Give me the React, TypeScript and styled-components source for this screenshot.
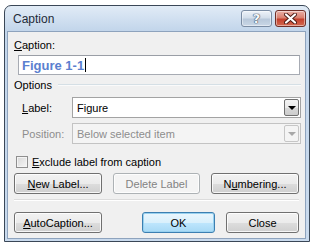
import styled, { createGlobalStyle } from "styled-components";

const GlobalStyle = createGlobalStyle`
  body {
    margin: 0;
    background: #ffffff;
    font-family: "Liberation Sans", Arial, sans-serif;
    font-size: 11px;
    color: #000;
  }
`

const Window = styled.div`
  box-sizing: border-box;
  width: 306px;
  height: 237px;
  margin: 5px 0 0 4px;
  border: 1px solid #3a4757;
  border-radius: 7px 7px 0 0;
  background: linear-gradient(#e1ebf6, #c3d6eb 24px, #c9daed);
  display: flex;
  flex-direction: column;
  padding: 0 3px 2px 2px;
`

const TitleBar = styled.div`
  height: 25px;
  display: flex;
  align-items: center;
  padding-left: 6px;
`

const Title = styled.span`
  flex: 1;
  font-size: 12px;
  color: #1e2a38;
  margin-top: 1px;
`

const CaptionButton = styled.div<{ $close?: boolean }>`
  box-sizing: border-box;
  width: 31px;
  height: 17px;
  margin-left: 3px;
  border: 1px solid ${(p) => (p.$close ? "#6e2f28" : "#7a8ca3")};
  border-radius: 3px;
  background: ${(p) =>
    p.$close
      ? "linear-gradient(#eab0a7, #d9806f 45%, #c4402d 55%, #d26a52)"
      : "linear-gradient(#eef3f9, #d3deea 45%, #b8c8da 55%, #c9d7e6)"};
  display: flex;
  align-items: center;
  justify-content: center;
  box-shadow: inset 0 0 0 1px rgba(255, 255, 255, 0.45);
`

const HelpGlyph = styled.span`
  font-family: "DejaVu Sans", sans-serif;
  font-weight: bold;
  font-size: 13px;
  line-height: 13px;
  color: #f6f8fb;
  text-shadow: 0 0 1px #3d4c60, 0 0 1px #3d4c60, 0 0 1px #3d4c60;
`

const Client = styled.div`
  flex: 1;
  border: 1px solid #8ea3bd;
  background: #f0f0f0;
  display: flex;
  flex-direction: column;
`

const FieldLabel = styled.div`
  line-height: 14px;
  margin: 6px 0 0 6px;
`

const Key = styled.span`
  text-decoration: underline;
  text-underline-offset: 1px;
`

const CaptionInput = styled.div`
  box-sizing: border-box;
  width: 282px;
  height: 20px;
  margin: 3px 0 0 10px;
  border: 1px solid #a7abb3;
  border-top-color: #9a9ea6;
  background: #fff;
  display: flex;
  align-items: center;
  padding-left: 3px;
  font-size: 13px;
  font-weight: bold;
  color: #5a80cf;
`

const Caret = styled.span`
  width: 1px;
  height: 14px;
  margin-left: 1px;
  background: #000;
`

const GroupHeader = styled.div`
  display: flex;
  align-items: center;
  margin: 3px 4px 0 6px;
  line-height: 14px;
`

const GroupLine = styled.div`
  flex: 1;
  height: 1px;
  margin-left: 6px;
  background: #d5dfe5;
  border-bottom: 1px solid #fafafa;
`

const FormRow = styled.div<{ $top: number }>`
  display: flex;
  align-items: center;
  margin: ${(p) => p.$top}px 4px 0 14px;
`

const RowLabel = styled.span<{ $disabled?: boolean }>`
  width: 50px;
  color: ${(p) => (p.$disabled ? "#8d8d8d" : "#000")};
`

const Combo = styled.div<{ $disabled?: boolean }>`
  box-sizing: border-box;
  flex: 1;
  height: 21px;
  border: 1px solid ${(p) => (p.$disabled ? "#c3c3c3" : "#a3a3a3")};
  background: ${(p) => (p.$disabled ? "#f4f4f4" : "#fff")};
  display: flex;
  align-items: center;
  padding: 0 1px 0 4px;
  color: ${(p) => (p.$disabled ? "#8d8d8d" : "#000")};
`

const ComboText = styled.span`
  flex: 1;
`

const ComboButton = styled.div<{ $disabled?: boolean }>`
  box-sizing: border-box;
  width: 15px;
  height: 17px;
  border: 1px solid ${(p) => (p.$disabled ? "#c6c6c6" : "#707070")};
  border-radius: 2px;
  background: ${(p) =>
    p.$disabled
      ? "#f4f4f4"
      : "linear-gradient(#f3f3f3, #e9e9e9 50%, #d8d8d8 51%, #cdcdcd)"};
  display: flex;
  align-items: center;
  justify-content: center;
`

const Arrow = styled.div<{ $disabled?: boolean }>`
  width: 0;
  height: 0;
  border-left: 4px solid transparent;
  border-right: 4px solid transparent;
  border-top: 4px solid ${(p) => (p.$disabled ? "#a8a8a8" : "#000")};
  margin-top: 1px;
`

const CheckRow = styled.label`
  display: flex;
  align-items: center;
  margin: 11px 0 0 8px;
  gap: 4px;
  line-height: 14px;
`

const Box = styled.span`
  box-sizing: border-box;
  width: 12px;
  height: 12px;
  border: 1px solid #8f8f8f;
  background: linear-gradient(135deg, #d8d8d8, #f6f6f6);
  box-shadow: inset 0 0 0 1px #f4f4f4;
`

const ButtonRow = styled.div<{ $top: number }>`
  display: flex;
  align-items: center;
  gap: 11px;
  margin: ${(p) => p.$top}px 6px 0 6px;
`

const Spacer = styled.div`
  flex: 1;
`

const Button = styled.div<{ $w: number; $disabled?: boolean; $default?: boolean }>`
  box-sizing: border-box;
  width: ${(p) => p.$w}px;
  height: 21px;
  border: 1px solid ${(p) => (p.$disabled ? "#adb2b5" : p.$default ? "#3c7fb1" : "#707070")};
  border-radius: 3px;
  display: flex;
  align-items: center;
  justify-content: center;
  color: ${(p) => (p.$disabled ? "#838383" : "#000")};
  background: ${(p) =>
    p.$disabled
      ? "#f4f4f4"
      : p.$default
      ? "linear-gradient(#eaf6fd, #d9f0fc 50%, #bee6fd 51%, #a7d9f5)"
      : "linear-gradient(#f2f2f2, #ebebeb 50%, #dddddd 51%, #cfcfcf)"};
  box-shadow: inset 0 0 0 1px ${(p) => (p.$default ? "#98d1ef" : "rgba(255,255,255,0.8)")};
`

const Separator = styled.div`
  height: 1px;
  margin: 5px 6px 0 6px;
  background: #dcdcdc;
  border-bottom: 1px solid #ffffff;
`

export default function App() {
  return (
    <>
      <GlobalStyle />
      <Window>
        <TitleBar>
          <Title>Caption</Title>
          <CaptionButton>
            <HelpGlyph>?</HelpGlyph>
          </CaptionButton>
          <CaptionButton $close>
            <svg width="13" height="11" viewBox="0 0 13 11">
              <path
                d="M2 1.5 L11 9.5 M11 1.5 L2 9.5"
                stroke="#4a1a14"
                strokeWidth="4"
                strokeLinecap="round"
              />
              <path
                d="M2 1.5 L11 9.5 M11 1.5 L2 9.5"
                stroke="#ffffff"
                strokeWidth="2.2"
                strokeLinecap="round"
              />
            </svg>
          </CaptionButton>
        </TitleBar>
        <Client>
          <FieldLabel>
            <Key>C</Key>aption:
          </FieldLabel>
          <CaptionInput>
            Figure 1-1
            <Caret />
          </CaptionInput>
          <GroupHeader>
            Options
            <GroupLine />
          </GroupHeader>
          <FormRow $top={5}>
            <RowLabel>
              <Key>L</Key>abel:
            </RowLabel>
            <Combo>
              <ComboText>Figure</ComboText>
              <ComboButton>
                <Arrow />
              </ComboButton>
            </Combo>
          </FormRow>
          <FormRow $top={5}>
            <RowLabel $disabled>Position:</RowLabel>
            <Combo $disabled>
              <ComboText>Below selected item</ComboText>
              <ComboButton $disabled>
                <Arrow $disabled />
              </ComboButton>
            </Combo>
          </FormRow>
          <CheckRow>
            <Box />
            <span>
              <Key>E</Key>xclude label from caption
            </span>
          </CheckRow>
          <ButtonRow $top={4}>
            <Button $w={88}>
              <span>
                <Key>N</Key>ew Label...
              </span>
            </Button>
            <Button $w={87} $disabled>
              Delete Label
            </Button>
            <Button $w={88}>
              <span>
                N<Key>u</Key>mbering...
              </span>
            </Button>
          </ButtonRow>
          <Separator />
          <ButtonRow $top={11}>
            <Button $w={88}>
              <span>
                <Key>A</Key>utoCaption...
              </span>
            </Button>
            <Spacer />
            <Button $w={73} $default>
              OK
            </Button>
            <Button $w={73}>Close</Button>
          </ButtonRow>
        </Client>
      </Window>
    </>
  )
}
